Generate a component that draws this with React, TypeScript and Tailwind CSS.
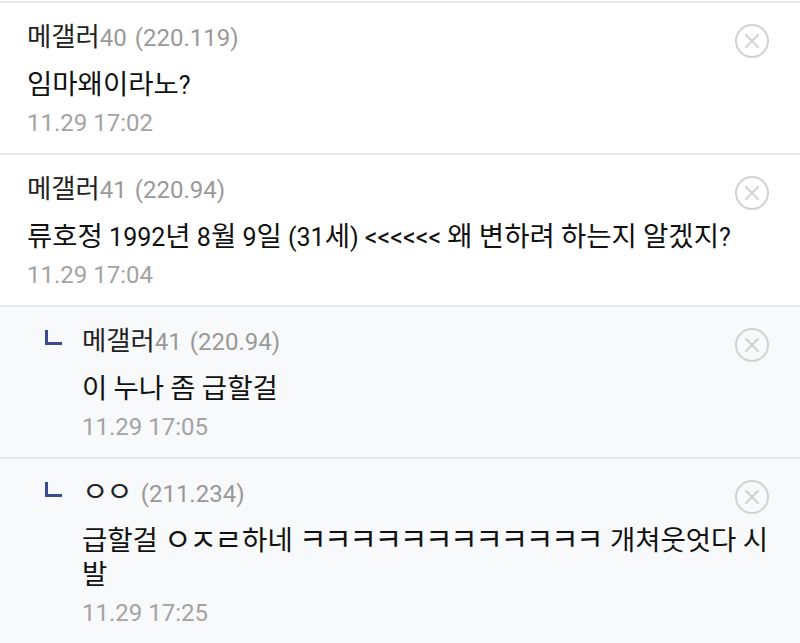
import React from "react";

interface Comment {
    id: number,
    name: string,
    suffix?: string,
    ip: string,
    body: string,
    date: string,
    reply?: boolean,
}

const comments: Comment[] = [
    {id: 1, name: "메갤러", suffix: "40", ip: "(220.119)", body: "임마왜이라노?", date: "11.29 17:02"},
    {
        id: 2,
        name: "메갤러",
        suffix: "41",
        ip: "(220.94)",
        body: "류호정 1992년 8월 9일 (31세) <<<<<< 왜 변하려 하는지 알겠지?",
        date: "11.29 17:04"
    },
    {id: 3, name: "메갤러", suffix: "41", ip: "(220.94)", body: "이 누나 좀 급할걸", date: "11.29 17:05", reply: true},
    {
        id: 4,
        name: "ㅇㅇ",
        ip: "(211.234)",
        body: "급할걸 ㅇㅈㄹ하네 ㅋㅋㅋㅋㅋㅋㅋㅋㅋㅋㅋㅋ 개쳐웃엇다 시발",
        date: "11.29 17:25",
        reply: true
    },
];

// hangul on the phone sits a bit bigger than roboto, so bump those runs
// jamo glyphs are tiny in noto cjk -> draw them bigger and pull them together
const Ko = ({text}: { text: string }) => {
    const parts = text.split(/([\uAC00-\uD7A3]+|[\u3131-\u318E]+)/)
    return (
        <>
            {parts.map((p, i) => {
                if (/[\u3131-\u318E]/.test(p)) return <span key={i} className="text-[1.2em] tracking-[-0.08em] mr-[0.08em] leading-[0]">{p}</span>
                if (/[\uAC00-\uD7A3]/.test(p)) return <span key={i} className="text-[1.1em] leading-none">{p}</span>
                return <React.Fragment key={i}>{p}</React.Fragment>
            })}
        </>
    )
}

const DeleteIcon = () => (
    <svg width="36" height="36" viewBox="0 0 36 36" fill="none">
        <circle cx="18" cy="18" r="16" stroke="#d2d2d2" strokeWidth="2"/>
        <path d="M12 12 L24 24 M24 12 L12 24" stroke="#d2d2d2" strokeWidth="2" strokeLinecap="round"/>
    </svg>
)

const ReplyMark = () => (
    <div className="w-[37px] shrink-0 pt-[5px]">
        <div className="w-[17px] h-[15px] border-l-[3px] border-b-[3px] border-[#3b4a8f]"/>
    </div>
)

const CommentRow = ({item}: { item: Comment }) => {
    return (
        <div className={`relative flex border-b-2 border-[#e8e8ea] ${item.reply ? "bg-[#f8f9fb] pl-[45px]" : "bg-white pl-[27px]"} pr-[26px] pt-[18px] pb-[13px]`}>
            {item.reply && <ReplyMark/>}
            <div className="flex-1 min-w-0">
                <div className="text-[24px] leading-[34px] text-[#222]">
                    <Ko text={item.name}/>
                    {item.suffix && <span className="text-[#999]">{item.suffix}</span>}
                    <span className="text-[#999] ml-[8px]">{item.ip}</span>
                </div>
                <p className="mt-[14px] text-[25px] leading-[34px] text-[#111]">
                    <Ko text={item.body}/>
                </p>
                <div className="mt-[3px] text-[24px] leading-[34px] text-[#a3a3a3]">
                    {item.date}
                </div>
            </div>
            <div className="absolute right-[30px] top-[20px]">
                <DeleteIcon/>
            </div>
        </div>
    )
}

export default function App() {
    return (
        <div className="w-[800px] h-[643px] overflow-hidden bg-white font-['Roboto','Noto_Sans_CJK_KR',sans-serif]">
            <div className="border-t-2 border-[#e8e8ea] mt-[1px]">
                {comments.map(item => (
                    <CommentRow key={item.id} item={item}/>
                ))}
            </div>
        </div>
    )
}
